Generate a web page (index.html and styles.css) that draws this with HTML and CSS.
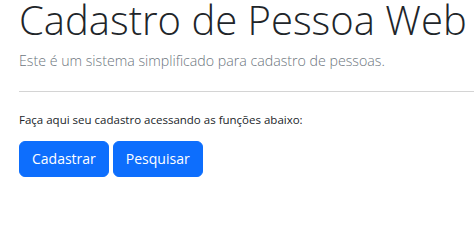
FILE: index.html
```html
<!DOCTYPE html>
<html lang="pt-BR">
<head>
<meta charset="utf-8">
<title>Cadastro de Pessoa Web</title>
<link rel="stylesheet" href="styles.css">
</head>
<body>
<div class="jumbo">
  <h1 class="title">Cadastro de Pessoa Web</h1>
  <p class="lead">Este é um sistema simplificado para cadastro de pessoas.</p>
  <hr class="divider">
  <p class="intro">Faça aqui seu cadastro acessando as funções abaixo:</p>
  <div class="actions">
    <a class="btn" href="#">Cadastrar</a>
    <a class="btn" href="#">Pesquisar</a>
  </div>
</div>
</body>
</html>
```

FILE: styles.css
```css
html, body {
  margin: 0;
  padding: 0;
  background: #ffffff;
}

body {
  font-family: "Open Sans", "Noto Sans", sans-serif;
  color: #212529;
}

.jumbo {
  padding: 0 0 0 19px;
}

.title {
  margin: 0;
  font-size: 40px;
  line-height: 40px;
  font-weight: 300;
  color: #212529;
  white-space: nowrap;
}

.lead {
  margin: 11px 0 0;
  font-size: 14.2px;
  line-height: 20px;
  font-weight: 300;
  color: #6c757d;
  white-space: nowrap;
}

.divider {
  margin: 20px 0 0;
  border: 0;
  border-top: 1px solid #d4d4d4;
  height: 0;
}

.intro {
  margin: 20px 0 0;
  font-size: 11.5px;
  line-height: 16px;
  color: #212529;
  white-space: nowrap;
}

.actions {
  display: flex;
  gap: 4px;
  margin-top: 13px;
}

.btn {
  display: inline-block;
  padding: 0 12px;
  line-height: 34px;
  font-size: 14px;
  color: #ffffff;
  background: #0d6efd;
  border: 1px solid #0d6efd;
  border-radius: 6px;
  text-decoration: none;
}
```
